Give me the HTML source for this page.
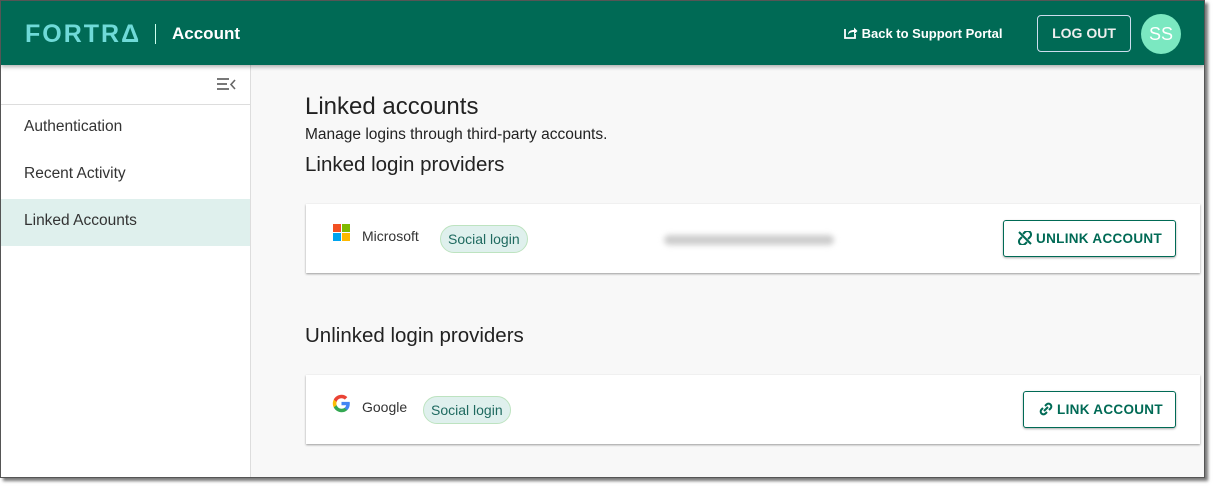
<!DOCTYPE html>
<html><head><style>
*{box-sizing:border-box;margin:0;padding:0}
body{width:1213px;height:486px;background:#fff;font-family:"Liberation Sans",sans-serif;position:relative;overflow:hidden}
#frame{position:absolute;left:0;top:0;width:1205px;height:478px;border:1px solid #555;box-shadow:3px 3px 3px #777;background:#f8f8f8;overflow:hidden}
#hdr{position:absolute;left:0;top:0;width:100%;height:64px;background:#006a55;box-shadow:0 2px 4px rgba(0,0,0,.3);z-index:2}
.logo{position:absolute;left:24px;top:19px;color:#6fdad8;font-size:25px;letter-spacing:2px;font-weight:bold;-webkit-text-stroke:0}
.sep{position:absolute;left:154px;top:23px;width:1px;height:20px;background:#cfe}
.acct{position:absolute;left:171px;top:23px;color:#fff;font-weight:bold;font-size:17px}
.back{position:absolute;left:843px;top:25px;color:#fff;font-size:13px;font-weight:bold}
.logout{position:absolute;left:1036px;top:14px;width:94px;height:37px;border:1px solid #cde;border-radius:4px;color:#eee;font-size:14px;font-weight:bold;text-align:center;line-height:35px}
.av{position:absolute;left:1140px;top:13px;width:40px;height:40px;border-radius:50%;background:#7be8c1;color:#fff;font-size:18px;text-align:center;line-height:40px}
#side{position:absolute;left:0;top:64px;width:250px;height:420px;background:#fff;border-right:1px solid #ddd}
.tog{height:40px;border-bottom:1px solid #ddd;position:relative}
.it{height:47px;line-height:43px;padding-left:23px;font-size:15.5px;color:#333}
.it.sel{background:#dff0ed}
h1{position:absolute;top:92px;font-weight:normal;font-size:24px;color:#222;white-space:nowrap}
.sub{position:absolute;top:125px;font-size:15.5px;color:#222;white-space:nowrap}
h2{position:absolute;font-weight:normal;font-size:20.5px;color:#222;white-space:nowrap}
.card{position:absolute;left:305px;width:894px;height:69px;background:#fff;box-shadow:0 1px 2px #999}
.pn{position:absolute;font-size:14px;color:#333}
.chip{position:absolute;height:28px;border:1px solid #bde3c0;background:#dff0ed;border-radius:14px;color:#1f6a60;font-size:14px;line-height:26px;padding:0 7px}
.btn{position:absolute;height:37px;border:1px solid #006a55;border-radius:3px;background:#fff;color:#006a55;font-weight:bold;font-size:13.5px;line-height:35px;box-shadow:0 1px 2px #aaa;letter-spacing:.3px}
</style></head><body>
<div id="frame">
<div id="hdr">
<div class="logo">FORTR&#916;</div><div class="sep"></div><div class="acct">Account</div>
<div class="back"><svg width="14" height="13" viewBox="0 0 14 13" style="vertical-align:-1px"><path d="M1 3v9h10V8" fill="none" stroke="#fff" stroke-width="1.8"/><path d="M4 9c0-4 3-5 6-5V1.5L13.5 5 10 8.5V6C7 6 5 7 4 9z" fill="#fff"/></svg> Back to Support Portal</div>
<div class="logout">LOG OUT</div>
<div class="av">SS</div>
</div>
<div id="side">
<div class="tog"><svg style="position:absolute;left:216px;top:13px" width="19" height="13" viewBox="0 0 19 13"><path d="M0 1h12M0 6h10M0 11h12" stroke="#666" stroke-width="1.8"/><path d="M18 2l-4 4.5 4 4.5" fill="none" stroke="#666" stroke-width="1.6"/></svg></div>
<div class="it">Authentication</div>
<div class="it">Recent Activity</div>
<div class="it sel">Linked Accounts</div>
</div>
<h1 style="left:304px">Linked accounts</h1>
<div class="sub" style="left:304px">Manage logins through third-party accounts.</div>
<h2 style="left:304px;top:152px">Linked login providers</h2>
<div class="card" style="top:203px">
<svg style="position:absolute;left:27px;top:20px" width="17" height="17"><rect width="8" height="8" fill="#f25022"/><rect x="9" width="8" height="8" fill="#7fba00"/><rect y="9" width="8" height="8" fill="#00a4ef"/><rect x="9" y="9" width="8" height="8" fill="#ffb900"/></svg>
<div class="pn" style="left:56px;top:24px">Microsoft</div>
<div class="chip" style="left:134px;top:21px">Social login</div>
<div style="position:absolute;left:358px;top:31px;width:170px;height:10px;background:#ccc;filter:blur(3px);border-radius:5px"></div>
<div class="btn" style="left:697px;top:16px;width:173px;padding-left:14px"><svg width="14" height="14" viewBox="0 0 14 14" style="vertical-align:-2px"><path d="M5 3l2-2a3 3 0 0 1 5 5l-2 2M9 11l-2 2a3 3 0 0 1-5-5l2-2M1 1l12 12" fill="none" stroke="#006a55" stroke-width="2"/></svg> UNLINK ACCOUNT</div>
</div>
<h2 style="left:304px;top:323px">Unlinked login providers</h2>
<div class="card" style="top:374px">
<svg style="position:absolute;left:26px;top:19px" width="19" height="19" viewBox="0 0 48 48"><path fill="#4285F4" d="M45 24.5c0-1.6-.1-3.1-.4-4.5H24v8.5h11.8c-.5 2.7-2 5-4.4 6.6v5.5h7.1c4.2-3.9 6.5-9.6 6.5-16.1z"/><path fill="#34A853" d="M24 46c5.9 0 10.9-2 14.5-5.4l-7.1-5.5c-2 1.300-4.5 2.1-7.4 2.1-5.7 0-10.6-3.9-12.3-9.1H4.4v5.7C8 41 15.5 46 24 46z"/><path fill="#FBBC05" d="M11.7 28.1c-.4-1.3-.7-2.7-.7-4.1s.3-2.8.7-4.1v-5.7H4.4C2.9 17.2 2 20.5 2 24s.9 6.8 2.4 9.8l7.3-5.7z"/><path fill="#EA4335" d="M24 10.8c3.2 0 6.1 1.1 8.4 3.3l6.3-6.3C34.9 4.2 29.9 2 24 2 15.5 2 8 7 4.4 14.2l7.3 5.7c1.7-5.2 6.6-9.1 12.3-9.1z"/></svg>
<div class="pn" style="left:56px;top:24px">Google</div>
<div class="chip" style="left:117px;top:21px">Social login</div>
<div class="btn" style="left:717px;top:16px;width:153px;padding-left:15px"><svg width="14" height="14" viewBox="0 0 14 14" style="vertical-align:-2px"><path d="M6 4l1.5-1.5a2.5 2.5 0 0 1 4 4L10 8M8 10l-1.5 1.5a2.5 2.5 0 0 1-4-4L4 6M5 9l4-4" fill="none" stroke="#006a55" stroke-width="2"/></svg> LINK ACCOUNT</div>
</div>
</div>
</body></html>
